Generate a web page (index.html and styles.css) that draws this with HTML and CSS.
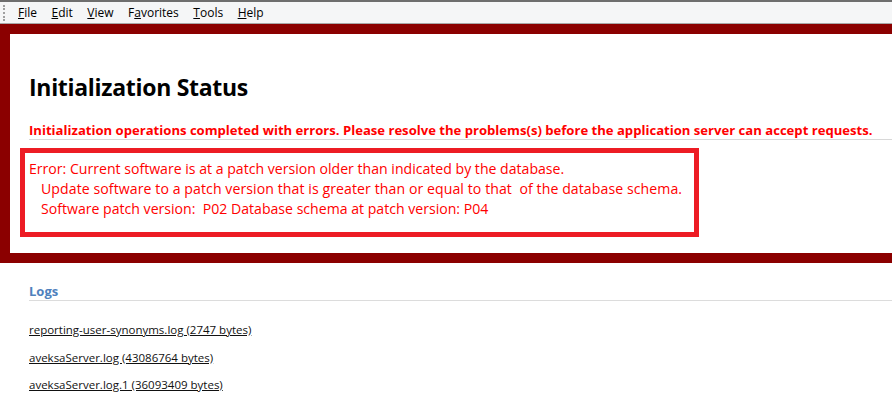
FILE: index.html
```html
<!DOCTYPE html>
<html>
<head>
<meta charset="utf-8">
<link rel="stylesheet" href="styles.css">
</head>
<body>
<div class="menubar">
  <span class="grip"></span>
  <span class="menu-item"><u>F</u>ile</span>
  <span class="menu-item"><u>E</u>dit</span>
  <span class="menu-item"><u>V</u>iew</span>
  <span class="menu-item">F<u>a</u>vorites</span>
  <span class="menu-item"><u>T</u>ools</span>
  <span class="menu-item"><u>H</u>elp</span>
</div>
<div class="frame">
  <h1 class="title">Initialization Status</h1>
  <div class="status">Initialization operations completed with errors. Please resolve the problems(s) before the application server can accept requests.</div>
  <div class="error-box">
    <div class="err-line">Error: Current software is at a patch version older than indicated by the database.</div>
    <div class="err-line indent wide">Update software to a patch version that is greater than or equal to that&nbsp; of the database schema.</div>
    <div class="err-line indent">Software patch version:&nbsp; P02 Database schema at patch version: P04</div>
  </div>
</div>
<div class="logs">
  <div class="logs-title">Logs</div>
  <a class="log-link" href="#">reporting-user-synonyms.log (2747 bytes)</a>
  <a class="log-link" href="#">aveksaServer.log (43086764 bytes)</a>
  <a class="log-link" href="#">aveksaServer.log.1 (36093409 bytes)</a>
</div>
</body>
</html>
```
FILE: styles.css
```css
html, body {
  margin: 0;
  padding: 0;
  background: #ffffff;
  font-family: "Open Sans", "Noto Sans", sans-serif;
}
.menubar {
  height: 21px;
  border-top: 2px solid #6e6e6e;
  border-bottom: 1px solid #a8a8a8;
  background: #f5f6f7;
  display: flex;
  align-items: center;
  font-size: 12px;
  color: #000;
  padding-left: 3px;
}
.grip {
  width: 2px;
  height: 16px;
  border-left: 2px dotted #a0a0a0;
  margin-right: 11px;
}
.menu-item {
  margin-right: 14.5px;
  line-height: 21px;
}
.frame {
  border: 10px solid #8b0000;
  border-right: none;
  padding: 38px 0 16px 10px;
}
.title {
  margin: 0 0 19px 9px;
  font-size: 23px;
  letter-spacing: -0.3px;
  line-height: 30px;
  font-weight: 700;
  color: #000;
}
.status {
  margin-left: 9px;
  font-size: 13.1px;
  line-height: 18px;
  font-weight: 700;
  color: #ff0000;
  border-bottom: 1px solid #d8d8d8;
  white-space: nowrap;
  overflow: hidden;
}
.error-box {
  margin-top: 8px;
  width: 665px;
  border: 5px solid #ed1c24;
  padding: 6px 0 13px 4px;
  color: #ff0000;
  font-size: 14.1px;
  line-height: 20px;
  white-space: nowrap;
}
.indent {
  padding-left: 12px;
}
.wide {
  letter-spacing: 0.08px;
}
.logs {
  padding: 19px 0 0 29px;
}
.logs-title {
  font-size: 13px;
  font-weight: 700;
  line-height: 18px;
  color: #4f81bd;
  border-bottom: 1px solid #dcdcdc;
  margin-bottom: 21px;
}
.log-link {
  display: block;
  width: max-content;
  font-size: 11.5px;
  line-height: 16px;
  color: #111;
  text-decoration: underline;
  margin-bottom: 11.5px;
}
```
